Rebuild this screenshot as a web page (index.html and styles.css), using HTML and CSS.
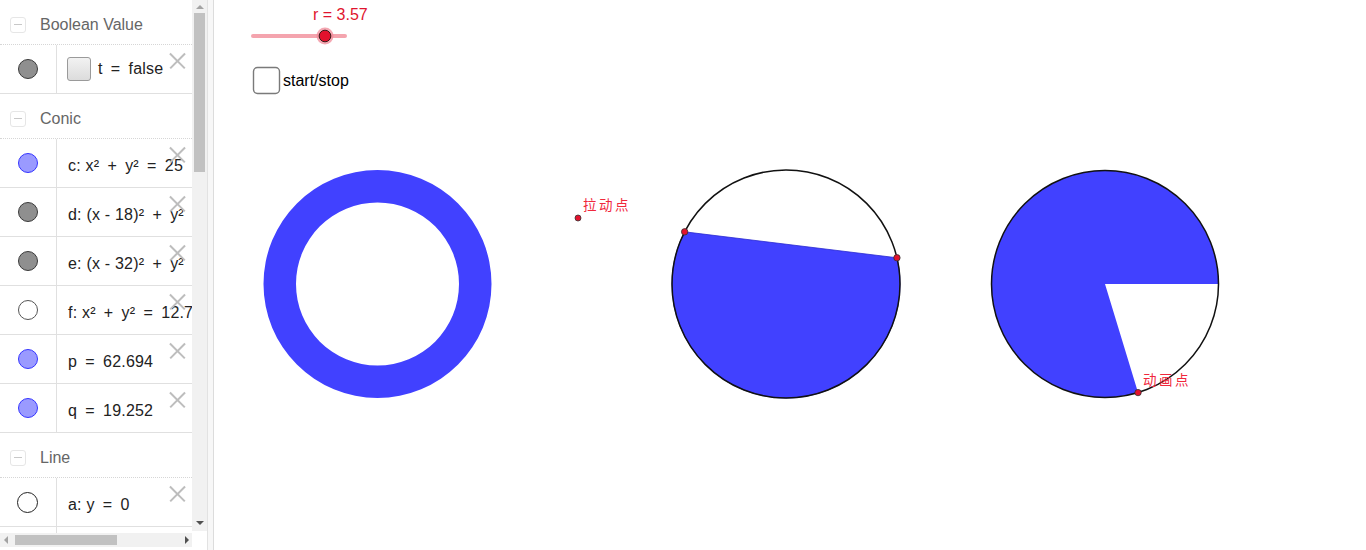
FILE: index.html
```html
<!DOCTYPE html>
<html>
<head>
<meta charset="utf-8">
<link rel="stylesheet" href="styles.css">
</head>
<body>
<div class="app">
  <aside class="algebra">
    <div class="av-view">
      <div class="av-list">
        <div class="group"><span class="collapse"></span><span class="group-name">Boolean Value</span></div>
        <div class="item">
          <div class="marble-cell"><span class="marble gray"></span></div>
          <div class="item-text center"><span class="bool-box"></span>t&ensp;=&ensp;false</div>
          <span class="del"></span>
        </div>
        <div class="group"><span class="collapse"></span><span class="group-name">Conic</span></div>
        <div class="item">
          <div class="marble-cell"><span class="marble blue"></span></div>
          <div class="item-text">c: x²&ensp;+&ensp;y²&ensp;=&ensp;25</div>
          <span class="del"></span>
        </div>
        <div class="item">
          <div class="marble-cell"><span class="marble gray"></span></div>
          <div class="item-text">d: (x - 18)²&ensp;+&ensp;y²&ensp;=&ensp;25</div>
          <span class="del"></span>
        </div>
        <div class="item">
          <div class="marble-cell"><span class="marble gray"></span></div>
          <div class="item-text">e: (x - 32)²&ensp;+&ensp;y²&ensp;=&ensp;25</div>
          <span class="del"></span>
        </div>
        <div class="item">
          <div class="marble-cell"><span class="marble white"></span></div>
          <div class="item-text">f: x²&ensp;+&ensp;y²&ensp;=&ensp;12.74</div>
          <span class="del"></span>
        </div>
        <div class="item">
          <div class="marble-cell"><span class="marble blue"></span></div>
          <div class="item-text">p&ensp;=&ensp;62.694</div>
          <span class="del"></span>
        </div>
        <div class="item">
          <div class="marble-cell"><span class="marble blue"></span></div>
          <div class="item-text">q&ensp;=&ensp;19.252</div>
          <span class="del"></span>
        </div>
        <div class="group"><span class="collapse"></span><span class="group-name">Line</span></div>
        <div class="item">
          <div class="marble-cell"><span class="marble hollow"></span></div>
          <div class="item-text">a: y&ensp;=&ensp;0</div>
          <span class="del"></span>
        </div>
        <div class="item">
          <div class="marble-cell"><span class="marble hollow"></span></div>
          <div class="item-text">b: x&ensp;=&ensp;0</div>
          <span class="del"></span>
        </div>
      </div>
      <div class="vscroll">
        <span class="arrow up"></span>
        <div class="vtrack"><span class="vthumb"></span></div>
        <span class="arrow down"></span>
      </div>
    </div>
    <div class="hbar">
      <div class="hscroll">
        <span class="arrow left"></span>
        <div class="htrack"><span class="hthumb"></span></div>
        <span class="arrow right"></span>
      </div>
      <div class="corner"></div>
    </div>
  </aside>
  <div class="splitter"></div>
  <main class="graphics">
    <svg class="canvas" width="1152" height="550" viewBox="214 0 1152 550" xmlns="http://www.w3.org/2000/svg">
      <!-- slider -->
      <text x="313" y="20" class="slider-label">r = 3.57</text>
      <line x1="253" y1="36" x2="345" y2="36" stroke="#f4a4ae" stroke-width="4" stroke-linecap="round"/>
      <circle cx="325" cy="36" r="8.5" fill="#f08a98" opacity="0.75"/>
      <circle cx="325" cy="36" r="5.8" fill="#e3122d" stroke="#3a1a1a" stroke-width="1"/>
      <!-- checkbox -->
      <rect x="253.5" y="67.5" width="26" height="26" rx="4" ry="4" fill="#fff" stroke="#7a7a7a" stroke-width="1.4"/>
      <text x="283" y="86" class="cb-label">start/stop</text>

      <!-- ring -->
      <path fill="#4141ff" fill-rule="evenodd" d="M 263.5 284 A 114 114 0 1 0 491.5 284 A 114 114 0 1 0 263.5 284 Z M 296 284 A 81.5 81.5 0 1 1 459 284 A 81.5 81.5 0 1 1 296 284 Z"/>

      <!-- drag point -->
      <circle cx="578" cy="218" r="3" fill="#e3122d" stroke="#333" stroke-width="0.8"/>
      <text x="583" y="210" class="cjk-label">拉动点</text>

      <!-- middle circle with segment -->
      <path fill="#4141ff" stroke="#2a2ad0" stroke-width="0.8" d="M 684.65 231.82 A 114 114 0 1 0 896.94 257.78 Z"/>
      <circle cx="786" cy="284" r="114" fill="none" stroke="#111" stroke-width="1.5"/>
      <circle cx="684.65" cy="231.82" r="3.2" fill="#e3122d" stroke="#333" stroke-width="0.8"/>
      <circle cx="896.94" cy="257.78" r="3.2" fill="#e3122d" stroke="#333" stroke-width="0.8"/>

      <!-- right circle with sector -->
      <path fill="#4141ff" d="M 1105 284 L 1218.5 284 A 113.5 113.5 0 1 0 1138.03 392.59 Z"/>
      <circle cx="1105" cy="284" r="113.5" fill="none" stroke="#111" stroke-width="1.5"/>
      <circle cx="1138.03" cy="392.59" r="3.2" fill="#e3122d" stroke="#333" stroke-width="0.8"/>
      <text x="1143" y="385" class="cjk-label">动画点</text>
    </svg>
  </main>
</div>
</body>
</html>
```

FILE: styles.css
```css
* { box-sizing: border-box; }
html, body {
  margin: 0;
  padding: 0;
  width: 1366px;
  height: 550px;
  overflow: hidden;
  background: #fff;
  font-family: "Liberation Sans", Arial, sans-serif;
}
.app {
  display: flex;
  width: 1366px;
  height: 550px;
}
.algebra {
  width: 208px;
  flex: none;
  height: 550px;
  border-right: 1px solid #e2e2e2;
  display: flex;
  flex-direction: column;
  background: #fff;
}
.av-view {
  display: flex;
  height: 533px;
  flex: none;
}
.av-list {
  width: 192px;
  flex: none;
  overflow: hidden;
}
.group {
  height: 45px;
  display: flex;
  align-items: center;
  border-bottom: 1px dotted #d6d6d6;
  padding-left: 10px;
  padding-top: 5px;
  white-space: nowrap;
}
.collapse {
  width: 16px;
  height: 16px;
  border: 1px solid #e6e6e6;
  border-radius: 3px;
  position: relative;
}
.collapse::after {
  content: "";
  position: absolute;
  left: 3px;
  top: 6px;
  width: 8px;
  height: 1.5px;
  background: #c8c8c8;
}
.group-name {
  margin-left: 14px;
  font-size: 16px;
  color: #666;
}
.item {
  position: relative;
  height: 49px;
  display: flex;
  border-bottom: 1px solid #e0e0e0;
  white-space: nowrap;
}
.marble-cell {
  width: 57px;
  flex: none;
  border-right: 1px solid #e0e0e0;
  display: flex;
  align-items: center;
  justify-content: center;
  padding-right: 1px;
}
.marble {
  width: 20px;
  height: 20px;
  border-radius: 50%;
  display: block;
}
.marble.gray { background: #8f8f8f; border: 1px solid #3a3a3a; }
.marble.blue { background: #9a9aff; border: 1px solid #3535ff; }
.marble.white { background: #fff; border: 1px solid #555; }
.marble.hollow { background: #fff; border: 1.4px solid #222; width: 21px; height: 21px; }
.item-text {
  padding-left: 11px;
  padding-top: 17px;
  font-size: 16px;
  letter-spacing: 0.2px;
  color: #222;
  line-height: 19px;
}
.item-text.center {
  display: flex;
  align-items: center;
  padding-top: 0;
  padding-bottom: 2px;
  padding-left: 10px;
}
.bool-box {
  width: 24px;
  height: 24px;
  border: 1px solid #9a9a9a;
  border-radius: 3px;
  background: linear-gradient(#f2f2f2, #dcdcdc);
  margin-right: 7px;
  margin-top: 1px;
}
.del {
  position: absolute;
  left: 169px;
  top: 7px;
  width: 17px;
  height: 17px;
}
.del::before, .del::after {
  content: "";
  position: absolute;
  left: -2px;
  top: 7.5px;
  width: 21px;
  height: 1.6px;
  background: #bdbdbd;
  transform: rotate(45deg);
}
.del::after { transform: rotate(-45deg); }
.vscroll {
  width: 15px;
  flex: none;
  background: #f1f1f1;
  display: flex;
  flex-direction: column;
  align-items: center;
  height: 531px;
}
.vtrack {
  flex: 1;
  width: 100%;
  padding: 0 2px;
}
.vthumb {
  display: block;
  width: 100%;
  height: 159px;
  background: #c1c1c1;
}
.arrow {
  width: 0;
  height: 0;
  flex: none;
  display: block;
}
.arrow.up {
  margin: 5px 0 4px;
  border-left: 4px solid transparent;
  border-right: 4px solid transparent;
  border-bottom: 4px solid #a3a3a3;
}
.arrow.down {
  margin: 4px 0 6px;
  border-left: 4px solid transparent;
  border-right: 4px solid transparent;
  border-top: 4px solid #505050;
}
.hbar {
  display: flex;
  height: 14px;
  flex: none;
}
.hscroll {
  width: 192px;
  background: #f1f1f1;
  display: flex;
  align-items: center;
}
.htrack {
  flex: 1;
  height: 100%;
  padding: 2px 0;
}
.hthumb {
  display: block;
  width: 102px;
  height: 100%;
  background: #c1c1c1;
}
.arrow.left {
  margin: 0 7px 0 4px;
  border-top: 4px solid transparent;
  border-bottom: 4px solid transparent;
  border-right: 4px solid #a3a3a3;
}
.arrow.right {
  margin: 0 3px 0 6px;
  border-top: 4px solid transparent;
  border-bottom: 4px solid transparent;
  border-left: 4px solid #505050;
}
.corner {
  width: 15px;
  background: #fff;
}
.splitter {
  width: 6px;
  flex: none;
  background: #f7f7f7;
  border-right: 1px solid #dcdcdc;
}
.graphics {
  flex: 1;
  height: 550px;
  overflow: hidden;
}
.canvas { display: block; }
.slider-label {
  font-family: "Liberation Sans", Arial, sans-serif;
  font-size: 16px;
  fill: #e0142e;
}
.cb-label {
  font-family: "Liberation Sans", Arial, sans-serif;
  font-size: 16px;
  fill: #000;
}
.cjk-label {
  font-family: "Noto Sans CJK SC", sans-serif;
  font-size: 13.5px;
  letter-spacing: 2.5px;
  fill: #f0283c;
}
```
